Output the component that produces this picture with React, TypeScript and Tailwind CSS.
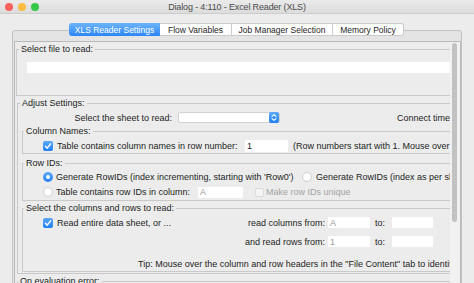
import { ReactNode } from "react";

type GroupProps = {
  title: string;
  className?: string;
  legendClass?: string;
  children?: ReactNode;
};

const Group = ({ title, className, legendClass, children }: GroupProps) => (
  <fieldset className={`border border-[#c9c9c9] ${className ?? ""}`}>
    <legend className={`px-[2px] leading-[10px] ${legendClass ?? ""}`}>
      {title}
    </legend>
    {children}
  </fieldset>
);

const Check = ({ className }: { className?: string }) => (
  <span
    className={`flex h-[10px] w-[10px] shrink-0 items-center justify-center rounded-[2px] bg-gradient-to-b from-[#5aa9fb] to-[#1f7ff5] ${className ?? ""}`}
  >
    <svg viewBox="0 0 10 10" className="h-[10px] w-[10px]">
      <path
        d="M2.4 5.3 L4.2 7.1 L7.6 2.9"
        fill="none"
        stroke="white"
        strokeWidth="1.5"
        strokeLinecap="round"
        strokeLinejoin="round"
      />
    </svg>
  </span>
);

const Radio = ({ on, className }: { on?: boolean; className?: string }) =>
  on ? (
    <span
      className={`flex h-[10px] w-[10px] shrink-0 items-center justify-center rounded-full bg-gradient-to-b from-[#5aa9fb] to-[#1f7ff5] ${className ?? ""}`}
    >
      <span className="h-[4px] w-[4px] rounded-full bg-white" />
    </span>
  ) : (
    <span
      className={`h-[10px] w-[10px] shrink-0 rounded-full border border-[#cfcfcf] bg-white ${className ?? ""}`}
    />
  );

const Field = ({
  value,
  className,
  muted,
}: {
  value?: string;
  className?: string;
  muted?: boolean;
}) => (
  <span
    className={`flex h-[11px] shrink-0 items-center bg-white pl-[2px] leading-[10px] ${
      muted ? "text-[#9b9b9b]" : ""
    } ${className ?? ""}`}
  >
    {value}
  </span>
);

const tabs = ["Flow Variables", "Job Manager Selection", "Memory Policy"];
const tabWidths = ["w-[72px]", "w-[101px]", "w-[71px]"];

export default function App() {
  return (
    <div className="h-[283px] w-[474px] overflow-hidden bg-[#ececec] font-['Liberation_Sans',Arial,sans-serif] text-[9px] leading-[10px] text-[#1d1d1d]">
      {/* title bar */}
      <div className="relative flex h-[14px] items-center border-b border-[#cdcdcd] bg-gradient-to-b from-[#ebebeb] to-[#dcdcdc]">
        <div className="ml-[5px] flex gap-[5px]">
          <span className="h-[8px] w-[8px] rounded-full bg-[#fc605c]" />
          <span className="h-[8px] w-[8px] rounded-full bg-[#fdbc40]" />
          <span className="h-[8px] w-[8px] rounded-full bg-[#34c84a]" />
        </div>
        <span className="absolute inset-x-0 text-center text-[9px] tracking-[-0.15px] text-[#4b4b4b]">
          Dialog - 4:110 - Excel Reader (XLS)
        </span>
      </div>

      {/* tabs */}
      <div className="relative z-10 ml-[69px] mt-[9px] flex h-[13px] text-[8.5px]">
        <div className="flex w-[91px] items-center justify-center rounded-l-[3px] bg-gradient-to-b from-[#6db5fb] to-[#2a86f8] text-white">
          XLS Reader Settings
        </div>
        {tabs.map((t, i) => (
          <div
            key={t}
            className={`flex ${tabWidths[i]} items-center justify-center border-y border-r border-[#cbcbcb] bg-white ${
              i === tabs.length - 1 ? "rounded-r-[3px]" : ""
            }`}
          >
            {t}
          </div>
        ))}
      </div>

      {/* tab pane */}
      <div className="-mt-[6px] ml-[12px] h-[262px] w-[450px] overflow-hidden rounded-t-[3px] border border-[#c3c3c3] bg-[#e4e4e4] pl-[1px] pt-[10px]">
        <div className="flex h-[260px] border-l border-r border-t border-[#b9b9b9] bg-[#ececec]">
          {/* viewport */}
          <div className="w-[435px] shrink-0 overflow-hidden">
            <div className="w-[560px] whitespace-nowrap">
              <Group
                title="Select file to read:"
                className="ml-[1px] mt-[2px]"
                legendClass="ml-[2px]"
              >
                <Field className="mb-[22px] ml-[10px] mt-[8px] w-[520px]" />
              </Group>

              <Group
                title="Adjust Settings:"
                className="ml-[2px] mt-[2px] pb-[1px]"
                legendClass="ml-[2px]"
              >
                <div className="mt-[4px] flex h-[11px] items-center">
                  <span className="w-[154px] text-right">
                    Select the sheet to read:
                  </span>
                  <span className="ml-[6px] flex h-[11px] w-[102px] items-center justify-end rounded-[2px] border border-[#d2d2d2] bg-white">
                    <span className="flex h-[11px] w-[10px] items-center justify-center rounded-[2px] bg-gradient-to-b from-[#5aa9fb] to-[#1f7ff5]">
                      <svg viewBox="0 0 10 11" className="h-[11px] w-[10px]">
                        <path
                          d="M3 4.4 L5 2.6 L7 4.4 M3 6.6 L5 8.4 L7 6.6"
                          fill="none"
                          stroke="white"
                          strokeWidth="1.1"
                          strokeLinecap="round"
                          strokeLinejoin="round"
                        />
                      </svg>
                    </span>
                  </span>
                  <span className="ml-[117px]">Connect timeout (s):</span>
                </div>

                <Group
                  title="Column Names:"
                  className="ml-[4px] mt-[3px] pb-[1px]"
                  legendClass="ml-[1px]"
                >
                  <div className="mt-[4px] flex h-[12px] items-center">
                    <Check className="ml-[20px]" />
                    <span className="ml-[4px] w-[184px]">
                      Table contains column names in row number:
                    </span>
                    <Field value="1" className="ml-[4px] h-[12px] w-[43px]" />
                    <span className="ml-[5px]">
                      (Row numbers start with 1. Mouse over the column header)
                    </span>
                  </div>
                </Group>

                <Group
                  title="Row IDs:"
                  className="ml-[4px] mt-[4px] pb-[3px]"
                  legendClass="ml-[1px]"
                >
                  <div className="mt-[4px] flex h-[10px] items-center">
                    <Radio on className="ml-[20px]" />
                    <span className="ml-[3px] w-[244px]">
                      Generate RowIDs (index incrementing, starting with 'Row0')
                    </span>
                    <Radio className="ml-[2px]" />
                    <span className="ml-[4px]">
                      Generate RowIDs (index as per sheet content)
                    </span>
                  </div>
                  <div className="mt-[5px] flex h-[10px] items-center">
                    <Radio className="ml-[20px]" />
                    <span className="ml-[3px] w-[137px]">
                      Table contains row IDs in column:
                    </span>
                    <Field
                      value="A"
                      muted
                      className="ml-[5px] h-[10px] w-[45px] bg-[#f6f6f6]"
                    />
                    <span className="ml-[12px] h-[9px] w-[9px] rounded-[2px] border border-[#dadada] bg-[#f4f4f4]" />
                    <span className="ml-[2px] text-[#a3a3a3]">
                      Make row IDs unique
                    </span>
                  </div>
                </Group>

                <Group
                  title="Select the columns and rows to read:"
                  className="ml-[4px] mt-[2px] pb-[2px]"
                  legendClass="ml-[1px]"
                >
                  <div className="mt-[4px] flex h-[11px] items-center">
                    <Check className="ml-[20px]" />
                    <span className="ml-[4px] w-[188px]">
                      Read entire data sheet, or ...
                    </span>
                    <span className="w-[80px] text-right">
                      read columns from:
                    </span>
                    <Field value="A" muted className="ml-[3px] w-[42px]" />
                    <span className="ml-[5px] w-[15px]">to:</span>
                    <Field className="ml-[2px] w-[41px]" />
                  </div>
                  <div className="mt-[8px] flex h-[11px] items-center">
                    <span className="ml-[222px] w-[80px] text-right">
                      and read rows from:
                    </span>
                    <Field value="1" muted className="ml-[3px] w-[42px]" />
                    <span className="ml-[5px] w-[15px]">to:</span>
                    <Field className="ml-[2px] w-[41px]" />
                  </div>
                  <div className="mt-[12px] flex h-[10px] items-center">
                    <span className="ml-[115px]">
                      Tip: Mouse over the column and row headers in the "File
                      Content" tab to identify them
                    </span>
                  </div>
                </Group>
              </Group>

              <Group
                title="On evaluation error:"
                className="ml-[2px] mt-[2px] h-[20px]"
              />
            </div>
          </div>

          {/* scrollbar */}
          <div className="w-[10px] shrink-0 bg-[#f1f1f1] pl-[2px] pt-[1px]">
            <div className="h-[179px] w-[5px] rounded-full bg-[#c2c2c2]" />
          </div>
        </div>
      </div>
    </div>
  );
}
